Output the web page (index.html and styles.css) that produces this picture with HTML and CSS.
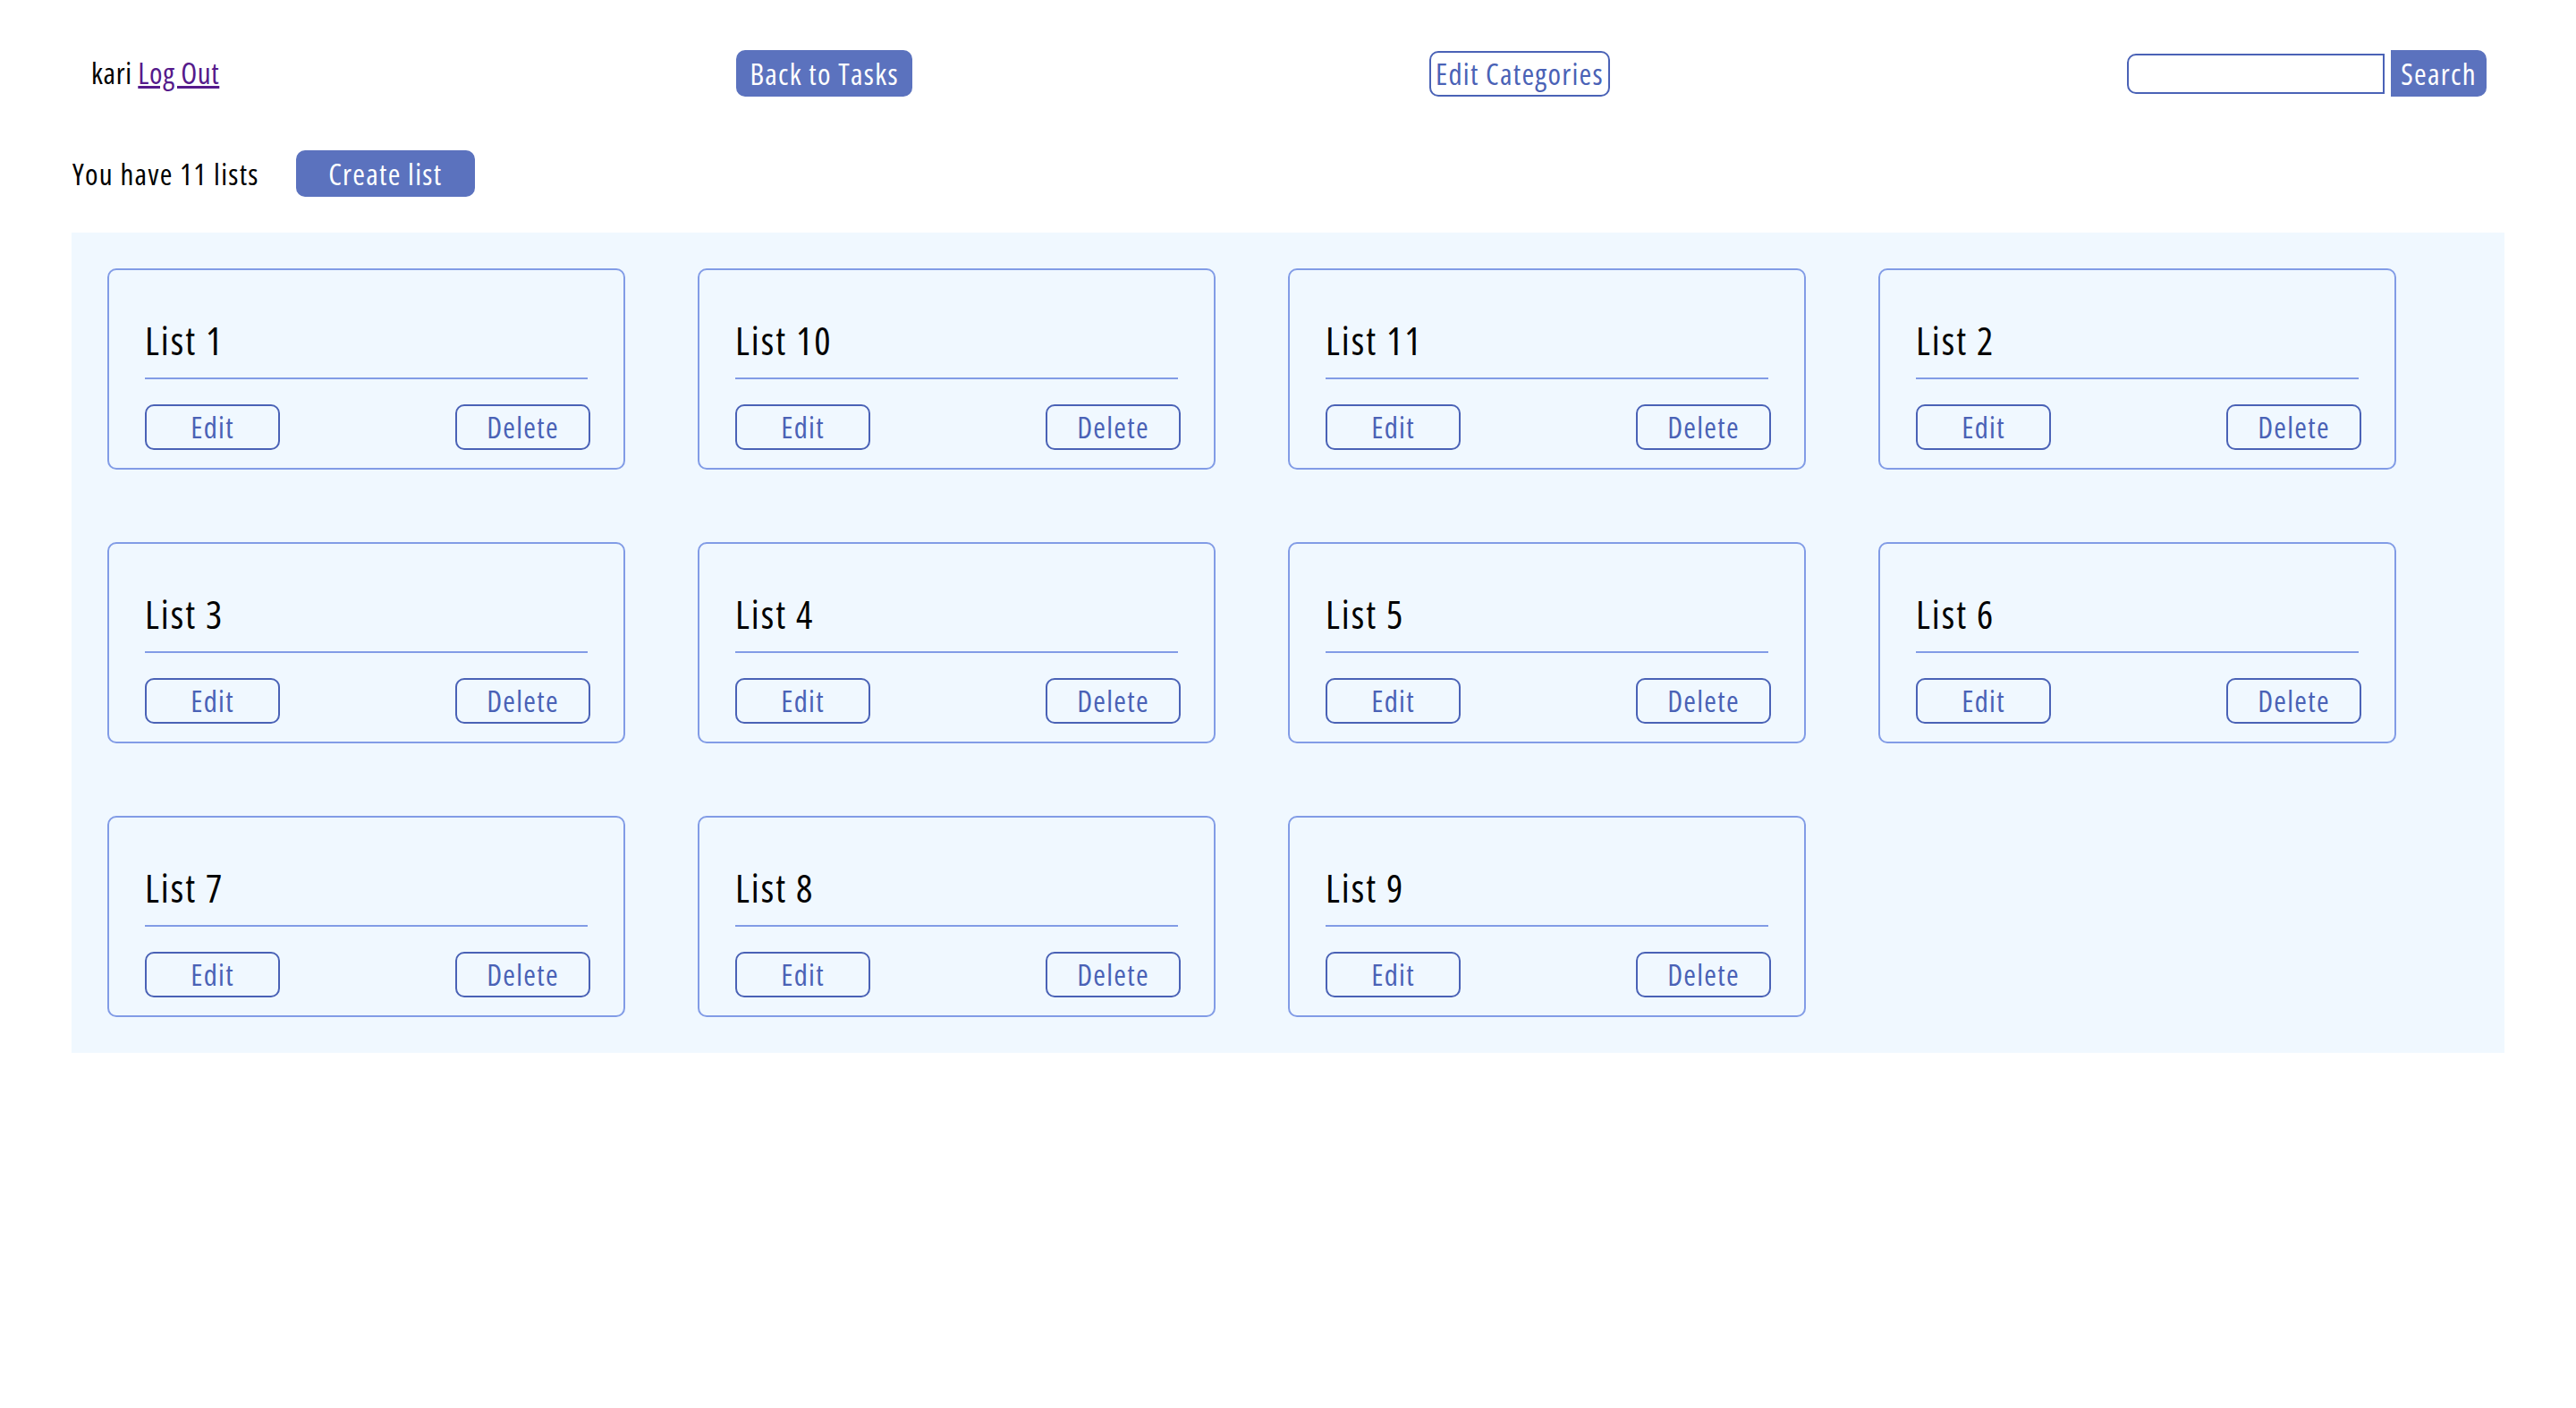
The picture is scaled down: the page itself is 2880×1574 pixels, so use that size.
FILE: index.html
```html
<!DOCTYPE html>
<html lang="en">
<head>
<meta charset="utf-8">
<title>Lists</title>
<link rel="stylesheet" href="styles.css">
</head>
<body>
<header class="topbar">
  <div class="user">kari <a href="#" class="logout">Log Out</a></div>
  <button class="btn btn-solid">Back to Tasks</button>
  <button class="btn btn-outline btn-tight">Edit Categories</button>
  <form class="search">
    <input type="text" class="search-input">
    <button type="button" class="btn btn-solid search-btn">Search</button>
  </form>
</header>

<div class="toolbar">
  <span class="count">You have 11 lists</span>
  <button class="btn btn-solid btn-wide">Create list</button>
</div>

<main class="lists">
  <div class="card"><h2 class="card-title">List 1</h2><div class="card-actions"><button class="btn btn-outline btn-card">Edit</button><button class="btn btn-outline btn-card">Delete</button></div></div>
  <div class="card"><h2 class="card-title">List 10</h2><div class="card-actions"><button class="btn btn-outline btn-card">Edit</button><button class="btn btn-outline btn-card">Delete</button></div></div>
  <div class="card"><h2 class="card-title">List 11</h2><div class="card-actions"><button class="btn btn-outline btn-card">Edit</button><button class="btn btn-outline btn-card">Delete</button></div></div>
  <div class="card"><h2 class="card-title">List 2</h2><div class="card-actions"><button class="btn btn-outline btn-card">Edit</button><button class="btn btn-outline btn-card">Delete</button></div></div>
  <div class="card"><h2 class="card-title">List 3</h2><div class="card-actions"><button class="btn btn-outline btn-card">Edit</button><button class="btn btn-outline btn-card">Delete</button></div></div>
  <div class="card"><h2 class="card-title">List 4</h2><div class="card-actions"><button class="btn btn-outline btn-card">Edit</button><button class="btn btn-outline btn-card">Delete</button></div></div>
  <div class="card"><h2 class="card-title">List 5</h2><div class="card-actions"><button class="btn btn-outline btn-card">Edit</button><button class="btn btn-outline btn-card">Delete</button></div></div>
  <div class="card"><h2 class="card-title">List 6</h2><div class="card-actions"><button class="btn btn-outline btn-card">Edit</button><button class="btn btn-outline btn-card">Delete</button></div></div>
  <div class="card"><h2 class="card-title">List 7</h2><div class="card-actions"><button class="btn btn-outline btn-card">Edit</button><button class="btn btn-outline btn-card">Delete</button></div></div>
  <div class="card"><h2 class="card-title">List 8</h2><div class="card-actions"><button class="btn btn-outline btn-card">Edit</button><button class="btn btn-outline btn-card">Delete</button></div></div>
  <div class="card"><h2 class="card-title">List 9</h2><div class="card-actions"><button class="btn btn-outline btn-card">Edit</button><button class="btn btn-outline btn-card">Delete</button></div></div>
</main>
</body>
</html>
```
FILE: styles.css
```css
* { box-sizing: border-box; }

body {
  margin: 0;
  background: #ffffff;
  color: #000000;
  font-family: "Open Sans", "DejaVu Sans Condensed", sans-serif;
  font-stretch: 75%;
  font-size: 33px;
  letter-spacing: 1.3px;
}

.topbar {
  display: flex;
  justify-content: space-between;
  align-items: center;
  height: 52px;
  margin-top: 56px;
  padding: 0 100px 0 102px;
}

.user {
  line-height: 52px;
  letter-spacing: 0.6px;
}

.logout {
  color: #551a8b;
  text-decoration: underline;
}

.btn {
  font-family: inherit;
  font-stretch: inherit;
  letter-spacing: 1.3px;
  font-size: 33px;
  height: 52px;
  line-height: 1;
  border-radius: 10px;
  cursor: pointer;
  display: inline-flex;
  align-items: center;
  justify-content: center;
}

.btn-solid {
  background: #5b72be;
  color: #ffffff;
  border: none;
  padding: 0 15px;
}

.btn-outline {
  background: transparent;
  color: #4a62b6;
  border: 2px solid #4a62b6;
}

.btn-tight {
  height: 51px;
  padding: 0 5px;
  background: #ffffff;
}

.btn-wide {
  width: 200px;
}

.search {
  display: flex;
  align-items: center;
  gap: 7px;
  margin: 0;
}

.search-input {
  width: 288px;
  height: 45px;
  border: 2px solid #4a62b6;
  border-radius: 10px 0 0 10px;
  background: #ffffff;
  font-family: inherit;
  font-size: 28px;
  outline: none;
}

.search-btn {
  border-radius: 0 10px 10px 0;
  width: 107px;
  padding: 0;
}

.toolbar {
  display: flex;
  align-items: center;
  gap: 41px;
  margin: 60px 80px 0 81px;
  height: 52px;
}

.lists {
  display: flex;
  flex-wrap: wrap;
  align-content: flex-start;
  gap: 81px;
  margin: 40px 80px 0 80px;
  padding: 40px;
  background: #f0f8ff;
}

.card {
  width: 579px;
  height: 225px;
  border: 2px solid #829ce6;
  border-radius: 10px;
  padding: 0 40px 20px;
}

.card-title {
  margin: 56px 0 0;
  font-size: 43px;
  letter-spacing: 2px;
  font-weight: normal;
  line-height: 46px;
  padding-bottom: 18px;
  border-bottom: 2px solid #829ce6;
}

.card-actions {
  display: flex;
  justify-content: space-between;
  margin: 28px -3px 0 0;
}

.btn-card {
  width: 151px;
  height: 51px;
  padding: 0;
}
```
